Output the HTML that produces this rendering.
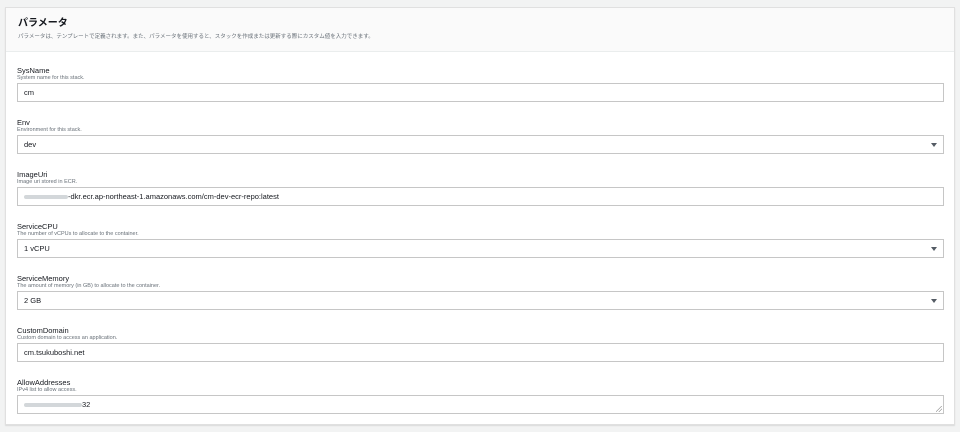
<!DOCTYPE html>
<html><head><meta charset="utf-8"><style>
*{box-sizing:border-box;margin:0;padding:0}
body{width:960px;height:432px;background:#f2f3f3;font-family:"Liberation Sans","Noto Sans CJK JP",sans-serif;color:#16191f;position:relative;overflow:hidden}
.panel{position:absolute;left:5px;top:7px;width:950px;height:418px;background:#fff;border:1px solid #e0e0e0;box-shadow:0 1px 1px rgba(0,0,0,.1)}
.hdr{height:44px;background:#fafafa;border-bottom:1px solid #eaeded;padding:9px 12px}
.hdr h2{font-size:10px;font-weight:bold;line-height:13px}
.hdr p{font-size:5.5px;color:#687078;margin-top:2px}
.f{position:absolute;left:17px;width:927px}
.l{font-size:7.5px;line-height:9px;color:#16191f}
.d{font-size:5.5px;color:#687078;line-height:7px}
.i{margin-top:1px;height:19px;border:1px solid #c6c6c6;font-size:7.5px;padding:0 6px;line-height:17px;position:relative;color:#16191f}
.a{position:absolute;right:6px;top:7px;width:0;height:0;border-left:3.5px solid transparent;border-right:3.5px solid transparent;border-top:4px solid #545b64}
.blur{display:inline-block;height:4px;background:#d3d7da;vertical-align:middle;border-radius:2px}
.rs{position:absolute;right:1px;bottom:1px;width:6px;height:6px;background:linear-gradient(135deg,transparent 45%,#999 46%,#999 52%,transparent 53%,transparent 70%,#999 71%,#999 77%,transparent 78%)}
</style></head><body>
<div class="panel">
<div class="hdr"><h2>パラメータ</h2><p>パラメータは、テンプレートで定義されます。また、パラメータを使用すると、スタックを作成または更新する際にカスタム値を入力できます。</p></div>
</div>
<div class="f" style="top:66px"><div class="l">SysName</div><div class="d">System name for this stack.</div><div class="i">cm</div></div>
<div class="f" style="top:118px"><div class="l">Env</div><div class="d">Environment for this stack.</div><div class="i">dev<span class="a"></span></div></div>
<div class="f" style="top:170px"><div class="l">ImageUri</div><div class="d">Image uri stored in ECR.</div><div class="i"><span class="blur" style="width:44px"></span>-dkr.ecr.ap-northeast-1.amazonaws.com/cm-dev-ecr-repo:latest</div></div>
<div class="f" style="top:222px"><div class="l">ServiceCPU</div><div class="d">The number of vCPUs to allocate to the container.</div><div class="i">1 vCPU<span class="a"></span></div></div>
<div class="f" style="top:274px"><div class="l">ServiceMemory</div><div class="d">The amount of memory (in GB) to allocate to the container.</div><div class="i">2 GB<span class="a"></span></div></div>
<div class="f" style="top:326px"><div class="l">CustomDomain</div><div class="d">Custom domain to access an application.</div><div class="i">cm.tsukuboshi.net</div></div>
<div class="f" style="top:378px"><div class="l">AllowAddresses</div><div class="d">IPv4 list to allow access.</div><div class="i"><span class="blur" style="width:58px"></span>32<span class="rs"></span></div></div>
</body></html>
